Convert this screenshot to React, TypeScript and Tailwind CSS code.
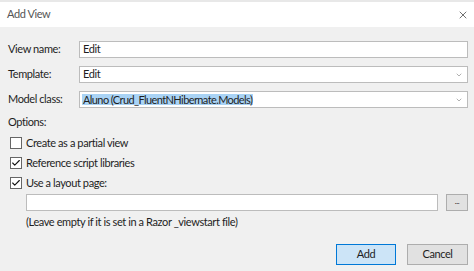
import { X, ChevronDown, Check } from "lucide-react";

const font = { fontFamily: 'Lato, "Noto Sans", sans-serif' };

const Field = ({ label, value, combo, selected }: { label: string; value: string; combo?: boolean; selected?: boolean }) => (
  <div className="flex items-center h-[17px]">
    <span className="w-[71px] shrink-0">{label}</span>
    <div className="flex-1 h-[17px] bg-white border border-[#bcbcbc] flex items-center pl-[2px] pr-[4px]">
      <span className={selected ? "bg-[#a9d3f5] px-[1px] leading-[11px] tracking-[-0.6px]" : "px-[1px]"}>{value}</span>
      {combo && <ChevronDown className="ml-auto w-[8px] h-[8px] text-[#8a8a8a]" strokeWidth={2} />}
    </div>
  </div>
);

const CheckRow = ({ label, checked }: { label: string; checked?: boolean }) => (
  <div className="flex items-center h-[12px] gap-[4px]">
    <div className="w-[12px] h-[12px] ml-[2px] bg-white border border-[#666] flex items-center justify-center">
      {checked && <Check className="w-[10px] h-[10px] text-[#111]" strokeWidth={2.6} />}
    </div>
    <span>{label}</span>
  </div>
);

export default function App() {
  return (
    <div className="w-[474px] h-[271px] bg-[#f0f0f0] text-[11px] tracking-[-0.4px] text-[#1e1e1e] flex flex-col overflow-hidden" style={font}>
      <div className="h-[2px] bg-[#e8e8e8]" />
      {/* title bar */}
      <div className="h-[25px] bg-white flex items-center pl-[7px] pr-[5px]">
        <span className="text-[#555]">Add View</span>
        <X className="ml-auto w-[12px] h-[12px] text-[#222]" strokeWidth={1.3} />
      </div>

      <div className="flex flex-col pl-[8px] pr-[6px]">
        <div className="mt-[14px] flex flex-col gap-[8px]">
          <Field label="View name:" value="Edit" />
          <Field label="Template:" value="Edit" combo />
          <Field label="Model class:" value="Aluno (Crud_FluentNHibernate.Models)" combo selected />
        </div>
        <div className="mt-[7px] h-[14px] flex items-center">Options:</div>
        <div className="mt-[8px] flex flex-col gap-[8px]">
          <CheckRow label="Create as a partial view" />
          <CheckRow label="Reference script libraries" checked />
          <CheckRow label="Use a layout page:" checked />
        </div>
        <div className="mt-[5px] ml-[18px] flex items-center gap-[8px]">
          <div className="flex-1 h-[17px] bg-white border border-[#bcbcbc]" />
          <button className="w-[22px] h-[17px] bg-[#e1e1e1] border border-[#adadad] text-[8px] leading-none pb-[3px]">...</button>
        </div>
        <div className="ml-[18px] mt-[4px] h-[14px] flex items-center">(Leave empty if it is set in a Razor _viewstart file)</div>
        <div className="mt-[15px] flex justify-end gap-[11px]">
          <button className="w-[60px] h-[21px] bg-[#cce4f7] border border-[#0078d7]">Add</button>
          <button className="w-[61px] h-[21px] bg-[#e1e1e1] border border-[#adadad]">Cancel</button>
        </div>
      </div>
    </div>
  );
}
